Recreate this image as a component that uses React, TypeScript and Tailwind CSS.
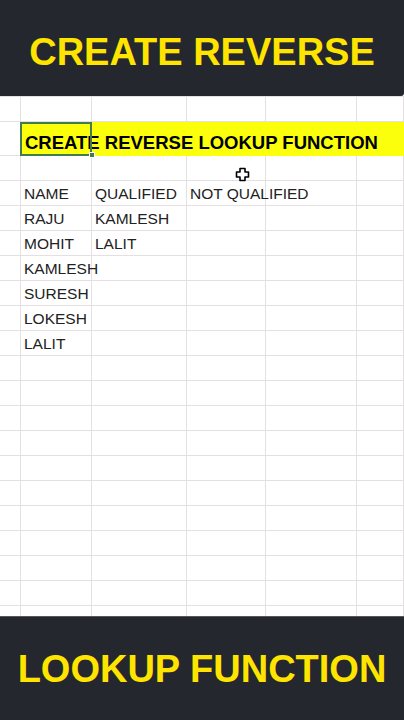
const cols = [21, 71, 95, 79, 91, 47];

const rows: string[][] = [
  ["NAME", "QUALIFIED", "NOT QUALIFIED"],
  ["RAJU", "KAMLESH"],
  ["MOHIT", "LALIT"],
  ["KAMLESH"],
  ["SURESH"],
  ["LOKESH"],
  ["LALIT"],
];

const Row = ({ cells = [] }: { cells?: string[] }) => (
  <div className="flex h-[25px] shrink-0">
    {cols.map((w, i) => (
      <div
        key={i}
        style={{ width: w }}
        className="shrink-0 border-r border-b border-[#e4dfe1] pl-[3px] pt-[3px] text-[15.5px] leading-[20px] whitespace-nowrap text-[#222222] overflow-visible"
      >
        {i > 0 ? cells[i - 1] : ""}
      </div>
    ))}
  </div>
);

const Cursor = () => (
  <svg width="15" height="15" viewBox="0 0 15 15" className="absolute left-[235px] top-[167px]">
    <path
      d="M5 1.5h5v3.5h3.5v5h-3.5v3.5h-5v-3.5h-3.5v-5h3.5z"
      fill="white"
      stroke="black"
      strokeWidth="1.6"
      strokeLinejoin="round"
    />
  </svg>
);

export default function App() {
  const empty = Array.from({ length: 14 });

  return (
    <div
      className="relative w-[404px] h-[720px] overflow-hidden bg-white flex flex-col"
      style={{ fontFamily: '"Liberation Sans", Arial, sans-serif' }}
    >
      <div className="h-[96px] shrink-0 bg-[#25272e] rounded-br-[3px] flex items-center justify-center pt-[8px]">
        <span className="text-[38px] leading-none font-bold text-[#ffe400]">CREATE REVERSE</span>
      </div>

      <div className="flex-1 min-h-0 flex flex-col overflow-hidden border-t border-[#e4dfe1]">
        <Row />
        <div className="flex h-[34px] shrink-0">
          <div className="w-[21px] shrink-0 border-r border-b border-[#e4dfe1]" />
          <div className="relative flex-1 bg-[#fbff0c] pl-[4px] pt-[10px] text-[18.5px] leading-[22px] font-bold text-black whitespace-nowrap">
            CREATE REVERSE LOOKUP FUNCTION
            <div className="absolute left-[-1px] top-[0px] w-[72px] h-[34px] border-2 border-[#3f7c4e]" />
            <div className="absolute left-[68px] top-[30px] w-[6px] h-[6px] bg-[#3f7c4e] border border-white" />
          </div>
        </div>
        <Row />
        {rows.map((r, i) => (
          <Row key={i} cells={r} />
        ))}
        {empty.map((_, i) => (
          <Row key={"e" + i} />
        ))}
      </div>

      <div className="h-[104px] shrink-0 bg-[#25272e] border-t border-[#55575c] flex items-center justify-center">
        <span className="text-[38px] leading-none font-bold text-[#ffe400]">LOOKUP FUNCTION</span>
      </div>

      <Cursor />
    </div>
  );
}
